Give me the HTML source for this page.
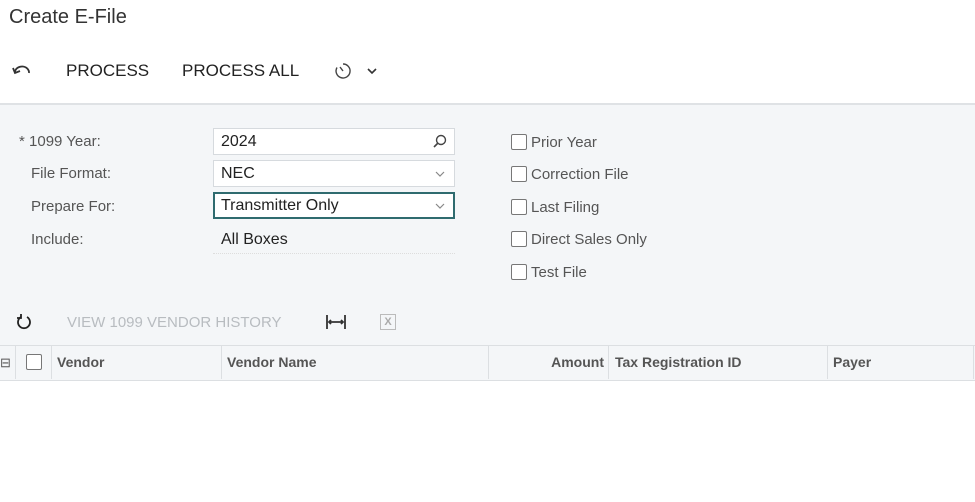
<!DOCTYPE html>
<html><head><style>
body{margin:0;width:975px;height:502px;background:#fff;font-family:"Liberation Sans",Arial,sans-serif;color:#222;position:relative;overflow:hidden}
.a{position:absolute;white-space:nowrap}
.lbl{font-size:15px;color:#555}
.box{position:absolute;left:213px;width:242px;height:27px;border:1px solid #d6dade;background:#fff;font-size:16px;line-height:25px;padding-left:7px;box-sizing:border-box}
.chev{position:absolute;right:9px;top:10px}
.cb{position:absolute;width:14px;height:14px;border:1px solid #777;border-radius:2px;background:#fff}
.th{position:absolute;top:346px;height:33px;line-height:33px;font-size:14px;font-weight:bold;color:#555;border-right:1px solid #dcdfe2;box-sizing:border-box}
</style></head><body>
<div class="a" style="left:9px;top:6px;font-size:20px;color:#333">Create E-File</div>
<svg class="a" style="left:12px;top:63px" width="20" height="14" viewBox="0 0 20 14"><path d="M3 9a7 6 0 0 1 14 1" fill="none" stroke="#333" stroke-width="1.8"/><path d="M1 5l2 5 5-2" fill="none" stroke="#333" stroke-width="1.8"/></svg>
<div class="a" style="left:66px;top:61px;font-size:17px">PROCESS</div>
<div class="a" style="left:182px;top:61px;font-size:17px">PROCESS ALL</div>
<svg class="a" style="left:334px;top:62px" width="18" height="18" viewBox="0 0 18 18"><path d="M9 2a7 7 0 1 1-6 3.5" fill="none" stroke="#444" stroke-width="1.4"/><path d="M9 9L6 5" stroke="#444" stroke-width="1.4"/></svg>
<svg class="a" style="left:367px;top:67px" width="10" height="8"><path d="M1 2l4 4 4-4" fill="none" stroke="#333" stroke-width="1.6"/></svg>
<div class="a" style="left:0;top:103px;width:975px;height:243px;background:#f4f6f8;border-top:2px solid #dfe2e5"></div>
<div class="a lbl" style="left:19px;top:133px">* 1099 Year:</div>
<div class="a lbl" style="left:31px;top:165px">File Format:</div>
<div class="a lbl" style="left:31px;top:198px">Prepare For:</div>
<div class="a lbl" style="left:31px;top:231px">Include:</div>
<div class="box" style="top:128px">2024<svg style="position:absolute;right:7px;top:5px" width="14" height="14"><circle cx="8" cy="6" r="4.5" fill="none" stroke="#444" stroke-width="1.4"/><path d="M5 9l-4 4" stroke="#444" stroke-width="1.6"/></svg></div>
<div class="box" style="top:160px">NEC<svg class="chev" width="10" height="6"><path d="M1 1l4 4 4-4" fill="none" stroke="#888" stroke-width="1.2"/></svg></div>
<div class="box" style="top:192px;border:2px solid #2f6b6f;padding-left:6px;line-height:24px">Transmitter Only<svg class="chev" style="top:9px;right:8px" width="10" height="6"><path d="M1 1l4 4 4-4" fill="none" stroke="#888" stroke-width="1.2"/></svg></div>
<div class="a" style="left:221px;top:231px;font-size:16px">All Boxes</div>
<div class="a" style="left:213px;top:253px;width:242px;border-top:1px dotted #ddd"></div>
<div class="cb" style="left:511px;top:134px"></div><div class="a lbl" style="left:531px;top:134px">Prior Year</div>
<div class="cb" style="left:511px;top:166px"></div><div class="a lbl" style="left:531px;top:166px">Correction File</div>
<div class="cb" style="left:511px;top:199px"></div><div class="a lbl" style="left:531px;top:199px">Last Filing</div>
<div class="cb" style="left:511px;top:231px"></div><div class="a lbl" style="left:531px;top:231px">Direct Sales Only</div>
<div class="cb" style="left:511px;top:264px"></div><div class="a lbl" style="left:531px;top:264px">Test File</div>
<svg class="a" style="left:15px;top:313px" width="18" height="18" viewBox="0 0 18 18"><path d="M12 4a6 6 0 1 1-6 0" fill="none" stroke="#222" stroke-width="1.8"/><path d="M6 1v4H2" fill="none" stroke="#222" stroke-width="1.8"/></svg>
<div class="a" style="left:67px;top:314px;font-size:15px;color:#b8bcc0">VIEW 1099 VENDOR HISTORY</div>
<svg class="a" style="left:325px;top:314px" width="22" height="16"><path d="M2 1v14M20 1v14M4 8h14M6 6l-2 2 2 2M16 6l2 2-2 2" fill="none" stroke="#333" stroke-width="1.8"/></svg>
<div class="a" style="left:380px;top:314px;width:14px;height:14px;border:1px solid #bbb;font-size:11px;font-weight:bold;color:#aaa;text-align:center;line-height:14px">X</div>
<div class="a" style="left:0;top:345px;width:975px;height:34px;background:#f4f6f8;border-top:1px solid #dcdfe2;border-bottom:1px solid #dcdfe2"></div>
<div class="th" style="left:0;width:16px;font-weight:normal;font-size:13px">⊟</div>
<div class="th" style="left:16px;width:36px"><div class="cb" style="left:10px;top:8px"></div></div>
<div class="th" style="left:52px;width:170px;padding-left:5px">Vendor</div>
<div class="th" style="left:222px;width:267px;padding-left:5px">Vendor Name</div>
<div class="th" style="left:489px;width:120px;text-align:right;padding-right:4px">Amount</div>
<div class="th" style="left:609px;width:219px;padding-left:6px">Tax Registration ID</div>
<div class="th" style="left:828px;width:146px;padding-left:5px">Payer</div>
</body></html>
